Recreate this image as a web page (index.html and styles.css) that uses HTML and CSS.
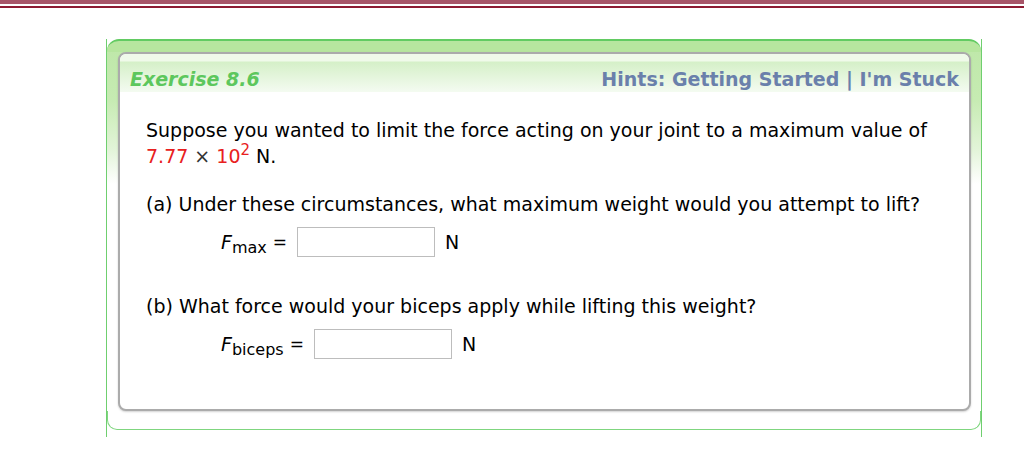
FILE: index.html
```html
<!DOCTYPE html>
<html>
<head>
<meta charset="utf-8">
<link rel="stylesheet" href="styles.css">
</head>
<body>
<div class="topband"></div>
<div class="topline"></div>
<div class="frame">
  <div class="cap"></div>
  <div class="card">
    <div class="head">
      <span class="title">Exercise 8.6</span>
      <span class="hints">Hints: Getting Started | I'm Stuck</span>
    </div>
    <div class="content">
      <p class="para">Suppose you wanted to limit the force acting on your joint to a maximum value of<br><span class="red">7.77</span> <span class="times">×</span> <span class="red">10<sup>2</sup></span> N.</p>
      <p class="para gap-a">(a) Under these circumstances, what maximum weight would you attempt to lift?</p>
      <div class="answer">
        <span class="var"><i>F</i><sub>max</sub></span><span class="eq">=</span><input class="box" type="text"><span class="unit">N</span>
      </div>
      <p class="para gap-b">(b) What force would your biceps apply while lifting this weight?</p>
      <div class="answer">
        <span class="var"><i>F</i><sub>biceps</sub></span><span class="eq">=</span><input class="box" type="text"><span class="unit">N</span>
      </div>
    </div>
  </div>
  <div class="base"></div>
</div>
</body>
</html>
```
FILE: styles.css
```css
body {
  margin: 0;
  background: #fff;
  font-family: "DejaVu Sans", Verdana, sans-serif;
  color: #000;
}
.topband {
  height: 4px;
  background: #a75569;
}
.topline {
  height: 2px;
  margin-top: 2px;
  background: #8d1b33;
}
.frame {
  width: 874px;
  margin: 31px 0 0 106px;
  border-left: 1px solid #6fcf6f;
  border-right: 1px solid #6fcf6f;
  padding-bottom: 7px;
  background: linear-gradient(to bottom, #fff 0, #fff 12px, #bfe8aa 12px, #c6ebb2 60px, #e2f4d8 110px, #fff 145px);
}
.cap {
  height: 11px;
  border-top: 2px solid #62cb62;
  background: #b7e69f;
  border-radius: 12px 12px 0 0;
}
.card {
  margin: 0 10px 0 11px;
  height: 359px;
  box-sizing: border-box;
  border: 2px solid #ababab;
  border-radius: 8px;
  background: #fff;
  overflow: hidden;
  box-shadow: 0 1px 2px rgba(0, 0, 0, 0.18);
}
.head {
  height: 38px;
  box-sizing: border-box;
  padding: 14px 10px 0 10px;
  display: flex;
  justify-content: space-between;
  align-items: flex-start;
  background: linear-gradient(to bottom, #f0faea 0, #f0faea 7px, #d5f0c8 8px, #f4fbf1 100%);
  font-size: 19px;
  line-height: 22px;
  font-weight: bold;
}
.title {
  font-style: italic;
  color: #5dc75d;
}
.hints {
  color: #6a80ab;
}
.content {
  padding: 25px 26px 0 26px;
}
.para {
  margin: 0;
  font-size: 19px;
  line-height: 26px;
}
.gap-a {
  margin-top: 22px;
}
.gap-b {
  margin-top: 36px;
}
.red {
  color: #e82020;
}
.times {
  color: #333;
}
sup {
  font-size: 15px;
  line-height: 0;
  vertical-align: 8px;
}
.answer {
  display: flex;
  align-items: center;
  height: 30px;
  margin-top: 10px;
  padding-left: 75px;
  font-size: 19px;
  line-height: 26px;
}
.var sub {
  font-size: 16px;
  line-height: 0;
  vertical-align: -4px;
}
.eq {
  font-size: 17px;
  margin: 0 10px 0 6px;
}
.box {
  width: 138px;
  height: 30px;
  box-sizing: border-box;
  margin: 0;
  padding: 0;
  border: 1px solid #bdbdbd;
  background: #fff;
}
.unit {
  margin-left: 10px;
}
.base {
  height: 18px;
  border: 1px solid #7fd67f;
  border-top: none;
  border-radius: 0 0 10px 10px;
}
```
